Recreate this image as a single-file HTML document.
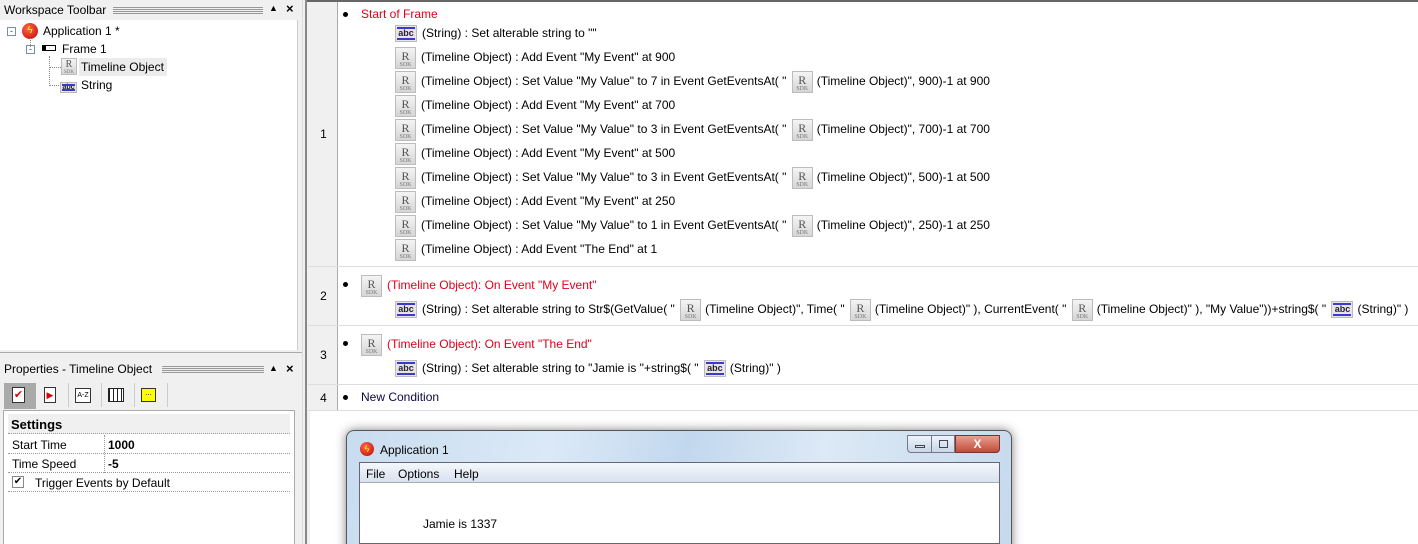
<!DOCTYPE html>
<html><head><meta charset="utf-8"><style>
*{margin:0;padding:0;box-sizing:border-box}
html,body{width:1418px;height:544px;overflow:hidden}
body{background:#fff;font-family:"Liberation Sans",Arial,sans-serif;font-size:12px;color:#000;position:relative}
.a{position:absolute}
.r{display:inline-block;width:21px;height:22px;background:linear-gradient(#f4f4f4,#d6d6d6);border:1px solid #bcbcbc;vertical-align:middle;text-align:center;font-family:"Liberation Serif",serif;line-height:1;color:#555;position:relative}
.r b{display:block;font-weight:normal;font-size:12px;margin-top:2px}
.r i{display:block;font-style:normal;font-size:6px;color:#777}
.c{display:inline-block;width:22px;height:17px;background:#e8e4e8;border:1px solid #bbb;vertical-align:middle;position:relative;text-align:center;font-size:9px;font-weight:bold;line-height:15px;color:#223}
.c:before,.c:after{content:"";position:absolute;left:1px;right:1px;height:2px;background:#3a3ad0}
.c:before{top:1px}.c:after{bottom:1px}
.ln{position:absolute;left:395px;height:24px;line-height:24px;white-space:nowrap}
.ln .r,.ln .c{margin-right:5px}
.ln .in{margin:0 4px 0 2px}
.red{color:#e0001a}
.dot{position:absolute;left:343px;width:5px;height:5px;border-radius:50%;background:#000}
.num{position:absolute;left:310px;width:28px;background:#f0f0f0;border-bottom:1px solid #aaa;border-right:1px solid #aaa;text-align:center;font-size:12px}
</style></head><body>
<div class="a" style="left:0;top:0;width:302px;height:544px;background:#f0f0f0"></div>
<div class="a" style="left:4px;top:3px;font-size:12px">Workspace Toolbar</div>
<div class="a" style="left:113px;top:7px;width:150px;height:7px;background:repeating-linear-gradient(#999 0 1px,transparent 1px 2px)"></div>
<div class="a" style="left:269px;top:3px;font-size:9px">▲</div>
<div class="a" style="left:286px;top:1px;font-size:13px;font-weight:bold">×</div>
<div class="a" style="left:0;top:20px;width:298px;height:330px;background:#fff;border-right:1px solid #ccc"></div>
<div class="a" style="left:7px;top:27px;width:9px;height:9px;border:1px solid #7a8ea8;font-size:9px;line-height:6px;text-align:center;color:#336">-</div>
<div class="a" style="left:22px;top:23px;width:16px;height:16px;border-radius:50%;background:radial-gradient(circle at 40% 35%,#ff6a50,#c00000);color:#ff0;font-size:10px;text-align:center;line-height:16px">ϟ</div>
<div class="a" style="left:43px;top:24px;font-size:12px">Application 1 *</div>
<div class="a" style="left:30px;top:38px;height:9px;border-left:1px dotted #888"></div>
<div class="a" style="left:26px;top:45px;width:9px;height:9px;border:1px solid #7a8ea8;font-size:9px;line-height:6px;text-align:center;color:#336">-</div>
<div class="a" style="left:42px;top:45px;width:14px;height:6px;border:1px solid #000;border-left:4px solid #000"></div>
<div class="a" style="left:62px;top:42px">Frame 1</div>
<div class="a" style="left:49px;top:56px;height:30px;border-left:1px dotted #888"></div>
<div class="a" style="left:49px;top:67px;width:12px;border-top:1px dotted #888"></div>
<div class="a" style="left:49px;top:85px;width:12px;border-top:1px dotted #888"></div>
<div class="a" style="left:61px;top:58px"><span class="r" style="width:16px;height:17px"><b style="font-size:10px;margin-top:1px">R</b><i style="font-size:5px">SDK</i></span></div>
<div class="a" style="left:79px;top:58px;width:88px;height:18px;background:#ececec"></div>
<div class="a" style="left:81px;top:60px">Timeline Object</div>
<div class="a" style="left:60px;top:80px"><span class="c" style="width:17px;height:11px;font-size:7px;line-height:9px">abc</span></div>
<div class="a" style="left:81px;top:78px">String</div>
<div class="a" style="left:0;top:352px;width:302px;height:2px;border-top:1px solid #aaa"></div>
<div class="a" style="left:4px;top:362px;font-size:12px">Properties - Timeline Object</div>
<div class="a" style="left:162px;top:366px;width:102px;height:7px;background:repeating-linear-gradient(#999 0 1px,transparent 1px 2px)"></div>
<div class="a" style="left:269px;top:363px;font-size:9px">▲</div>
<div class="a" style="left:286px;top:361px;font-size:13px;font-weight:bold">×</div>
<div class="a" style="left:4px;top:383px;width:32px;height:26px;background:#aaa"></div>
<div class="a" style="left:12px;top:387px;width:13px;height:16px;background:#fff;border:1px solid #333;color:#d00;font-size:11px;line-height:14px;text-align:center">✔</div>
<div class="a" style="left:44px;top:387px;width:12px;height:16px;background:#fff;border:1px solid #333;color:#d00;font-size:9px;line-height:14px;text-align:center">▶</div>
<div class="a" style="left:68px;top:383px;height:24px;border-left:1px solid #ccc"></div>
<div class="a" style="left:75px;top:388px;width:16px;height:15px;border:1px solid #333;background:#fff;font-size:7px;line-height:13px;text-align:center">A-Z</div>
<div class="a" style="left:101px;top:383px;height:24px;border-left:1px solid #ccc"></div>
<div class="a" style="left:108px;top:388px;width:16px;height:14px;border:1px solid #222;background:repeating-linear-gradient(90deg,#222 0 1px,#fff 1px 4px),#fff"></div>
<div class="a" style="left:134px;top:383px;height:24px;border-left:1px solid #ccc"></div>
<div class="a" style="left:141px;top:388px;width:15px;height:14px;border:1px solid #333;background:#ff0;font-size:8px;line-height:8px;text-align:center">...</div>
<div class="a" style="left:167px;top:383px;height:24px;border-left:1px solid #ccc"></div>
<div class="a" style="left:3px;top:410px;width:292px;height:134px;background:#fff;border:1px solid #aaa;border-bottom:none"></div>
<div class="a" style="left:8px;top:414px;width:282px;height:20px;background:#f0f0f0;border-bottom:1px dotted #999;font-weight:bold;font-size:13px;padding:3px 3px">Settings</div>
<div class="a" style="left:8px;top:435px;width:282px;height:19px;border-bottom:1px dotted #999"></div>
<div class="a" style="left:8px;top:454px;width:282px;height:19px;border-bottom:1px dotted #999"></div>
<div class="a" style="left:8px;top:473px;width:282px;height:19px;border-bottom:1px dotted #999"></div>
<div class="a" style="left:104px;top:435px;height:38px;border-left:1px dotted #999"></div>
<div class="a" style="left:12px;top:438px">Start Time</div>
<div class="a" style="left:108px;top:438px;font-weight:bold">1000</div>
<div class="a" style="left:12px;top:457px">Time Speed</div>
<div class="a" style="left:108px;top:457px;font-weight:bold">-5</div>
<div class="a" style="left:12px;top:476px;width:12px;height:12px;border:1px solid #888;font-size:10px;line-height:10px;text-align:center">✔</div>
<div class="a" style="left:35px;top:476px">Trigger Events by Default</div>
<div class="a" style="left:302px;top:0;width:8px;height:544px;background:#f0f0f0;border-left:1px solid #ddd"></div>
<div class="a" style="left:305px;top:0;width:2px;height:544px;background:#888"></div>
<div class="a" style="left:307px;top:0;width:1111px;height:2px;background:#666"></div>
<div class="num" style="top:2px;height:265px;line-height:265px">1</div>
<div class="num" style="top:267px;height:59px;line-height:59px">2</div>
<div class="num" style="top:326px;height:59px;line-height:59px">3</div>
<div class="num" style="top:385px;height:26px;line-height:26px">4</div>
<div class="dot" style="top:12px"></div>
<div class="a red" style="left:361px;top:7px">Start of Frame</div>
<div class="ln" style="top:21px"><span class="c">abc</span>(String) : Set alterable string to ""</div>
<div class="ln" style="top:45px"><span class="r"><b>R</b><i>SDK</i></span>(Timeline Object) : Add Event "My Event" at 900</div>
<div class="ln" style="top:69px"><span class="r"><b>R</b><i>SDK</i></span>(Timeline Object) : Set Value "My Value" to 7 in Event GetEventsAt( " <span class="r in"><b>R</b><i>SDK</i></span>(Timeline Object)", 900)-1 at 900</div>
<div class="ln" style="top:93px"><span class="r"><b>R</b><i>SDK</i></span>(Timeline Object) : Add Event "My Event" at 700</div>
<div class="ln" style="top:117px"><span class="r"><b>R</b><i>SDK</i></span>(Timeline Object) : Set Value "My Value" to 3 in Event GetEventsAt( " <span class="r in"><b>R</b><i>SDK</i></span>(Timeline Object)", 700)-1 at 700</div>
<div class="ln" style="top:141px"><span class="r"><b>R</b><i>SDK</i></span>(Timeline Object) : Add Event "My Event" at 500</div>
<div class="ln" style="top:165px"><span class="r"><b>R</b><i>SDK</i></span>(Timeline Object) : Set Value "My Value" to 3 in Event GetEventsAt( " <span class="r in"><b>R</b><i>SDK</i></span>(Timeline Object)", 500)-1 at 500</div>
<div class="ln" style="top:189px"><span class="r"><b>R</b><i>SDK</i></span>(Timeline Object) : Add Event "My Event" at 250</div>
<div class="ln" style="top:213px"><span class="r"><b>R</b><i>SDK</i></span>(Timeline Object) : Set Value "My Value" to 1 in Event GetEventsAt( " <span class="r in"><b>R</b><i>SDK</i></span>(Timeline Object)", 250)-1 at 250</div>
<div class="ln" style="top:237px"><span class="r"><b>R</b><i>SDK</i></span>(Timeline Object) : Add Event "The End" at 1</div>
<div class="a" style="left:308px;top:266px;width:1110px;border-top:1px solid #ddd"></div>
<div class="dot" style="top:282px"></div>
<div class="ln red" style="left:361px;top:273px"><span class="r" style="color:#555"><b>R</b><i>SDK</i></span>(Timeline Object): On Event "My Event"</div>
<div class="ln" style="top:297px"><span class="c">abc</span>(String) : Set alterable string to Str$(GetValue( " <span class="r in"><b>R</b><i>SDK</i></span>(Timeline Object)", Time( " <span class="r in"><b>R</b><i>SDK</i></span>(Timeline Object)" ), CurrentEvent( " <span class="r in"><b>R</b><i>SDK</i></span>(Timeline Object)" ), "My Value"))+string$( " <span class="c in">abc</span>(String)" )</div>
<div class="a" style="left:308px;top:325px;width:1110px;border-top:1px solid #ddd"></div>
<div class="dot" style="top:341px"></div>
<div class="ln red" style="left:361px;top:332px"><span class="r" style="color:#555"><b>R</b><i>SDK</i></span>(Timeline Object): On Event "The End"</div>
<div class="ln" style="top:356px"><span class="c">abc</span>(String) : Set alterable string to "Jamie is "+string$( " <span class="c in">abc</span>(String)" )</div>
<div class="a" style="left:308px;top:384px;width:1110px;border-top:1px solid #ddd"></div>
<div class="dot" style="top:395px"></div>
<div class="a" style="left:361px;top:390px;color:#0a0a40">New Condition</div>
<div class="a" style="left:308px;top:410px;width:1110px;border-top:1px solid #ddd"></div>
<div class="a" style="left:346px;top:430px;width:666px;height:130px;border-radius:8px;box-shadow:0 0 10px rgba(0,0,0,.5);background:linear-gradient(100deg,#c9dcef 0%,#dbe9f7 30%,#c2d8ee 50%,#dce9f6 70%,#c6d9ec 100%);border:1px solid #555"></div>
<div class="a" style="left:360px;top:442px;width:14px;height:14px;border-radius:50%;background:radial-gradient(circle at 40% 35%,#ff6a50,#c00000);color:#ff0;font-size:9px;text-align:center;line-height:14px">ϟ</div>
<div class="a" style="left:380px;top:443px">Application 1</div>
<div class="a" style="left:907px;top:435px;width:48px;height:18px;border:1px solid #778;border-radius:0 0 0 4px;background:linear-gradient(#eef4fb,#c8d6e6)"></div>
<div class="a" style="left:931px;top:435px;height:18px;border-left:1px solid #778"></div>
<div class="a" style="left:915px;top:445px;width:10px;height:3px;border:1px solid #445"></div>
<div class="a" style="left:939px;top:440px;width:9px;height:8px;border:1px solid #445"></div>
<div class="a" style="left:955px;top:435px;width:45px;height:18px;border:1px solid #733;border-radius:0 0 4px 0;background:linear-gradient(#e8a090,#c24a38);color:#fff;text-align:center;font-weight:bold;font-size:12px;line-height:17px">X</div>
<div class="a" style="left:359px;top:462px;width:641px;height:82px;background:#fff;border:1px solid #667"></div>
<div class="a" style="left:360px;top:463px;width:639px;height:20px;background:linear-gradient(#f4f7fc,#d9e1ef);border-bottom:1px solid #aab"></div>
<div class="a" style="left:366px;top:467px">File</div>
<div class="a" style="left:398px;top:467px">Options</div>
<div class="a" style="left:454px;top:467px">Help</div>
<div class="a" style="left:423px;top:517px">Jamie is 1337</div>
</body></html>
